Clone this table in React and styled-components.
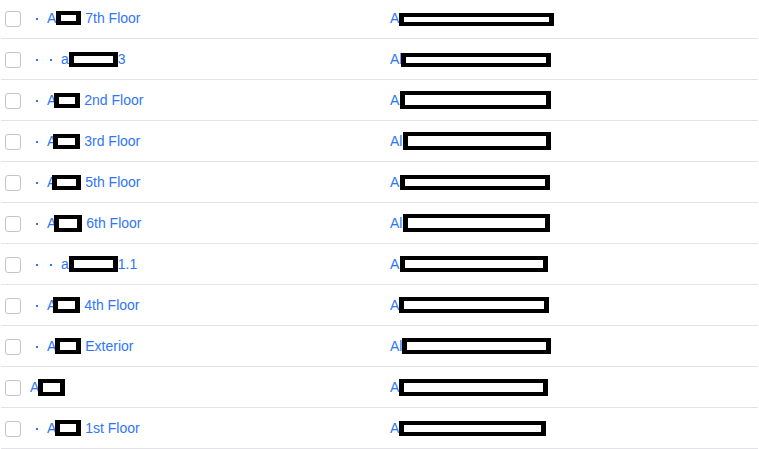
import React from "react";
import styled, { createGlobalStyle } from "styled-components";

const Global = createGlobalStyle`
  html, body { margin: 0; padding: 0; background: #fff; overflow: hidden; }
  body { font-family: "Liberation Sans", Arial, sans-serif; }
`;

const List = styled.div`
  margin-top: -2px;
  padding: 0 1px;
`;

const Row = styled.div`
  display: grid;
  grid-template-columns: 29px 360px 1fr;
  align-items: center;
  height: 40px;
  border-bottom: 1px solid #e2e2e8;
`;

const CheckCell = styled.div`
  display: flex;
  align-items: center;
  padding-left: 4px;
  padding-top: 1px;
`;

const Check = styled.span`
  box-sizing: border-box;
  width: 16px;
  height: 16px;
  border: 1px solid #c5c5c8;
  border-radius: 3px;
  background: #fff;
`;

const Cell = styled.div`
  display: flex;
  align-items: center;
  white-space: pre;
  font-size: 14px;
  color: #2f76f7;
  line-height: 20px;
`;

const Indent = styled.span`
  display: flex;
  margin-left: 3px;
`;

const Unit = styled.span`
  width: 14px;
  height: 20px;
  position: relative;
  &::before {
    content: "";
    position: absolute;
    left: 3px;
    top: 10px;
    width: 2px;
    height: 2px;
    background: #2f76f7;
  }
`;

const Redact = styled.span`
  box-sizing: border-box;
  display: inline-block;
  flex: none;
  background: #fff;
  border: solid #000;
  border-width: 4px 5px;
  width: ${(p) => p.$w}px;
  height: ${(p) => p.$h}px;
  margin-left: ${(p) => p.$dx}px;
  transform: translateY(${(p) => p.$dy || 0}px);
`;

const rows = [
  { level: 1, pre: "A", l: { dx: 0, w: 25, h: 14, dy: 0 }, post: " 7th Floor", rp: "A", r: { dx: 0, w: 155, h: 13, dy: 1 } },
  { level: 2, pre: "a", l: { dx: 0, w: 49, h: 15, dy: 0 }, post: "3", rp: "Al", r: { dx: -1, w: 150, h: 14, dy: 1 } },
  { level: 1, pre: "A", l: { dx: -2, w: 26, h: 15, dy: 0 }, post: " 2nd Floor", rp: "A", r: { dx: 1, w: 151, h: 18, dy: 0 } },
  { level: 1, pre: "A", l: { dx: -3, w: 27, h: 15, dy: 0 }, post: " 3rd Floor", rp: "Al", r: { dx: 1, w: 148, h: 18, dy: 0 } },
  { level: 1, pre: "A", l: { dx: -4, w: 29, h: 15, dy: 0 }, post: " 5th Floor", rp: "A", r: { dx: 1, w: 150, h: 15, dy: 0 } },
  { level: 1, pre: "A", l: { dx: -2, w: 28, h: 17, dy: 0 }, post: " 6th Floor", rp: "Al", r: { dx: 1, w: 147, h: 18, dy: 0 } },
  { level: 2, pre: "a", l: { dx: 0, w: 49, h: 16, dy: 0 }, post: "1.1", rp: "A", r: { dx: 1, w: 148, h: 16, dy: 0 } },
  { level: 1, pre: "A", l: { dx: -3, w: 27, h: 16, dy: 0 }, post: " 4th Floor", rp: "A", r: { dx: 0, w: 150, h: 16, dy: 0 } },
  { level: 1, pre: "A", l: { dx: -1, w: 26, h: 16, dy: 0 }, post: " Exterior", rp: "Al", r: { dx: 0, w: 149, h: 16, dy: 0 } },
  { level: 0, pre: "A", l: { dx: -1, w: 27, h: 17, dy: 0 }, post: "", rp: "A", r: { dx: 0, w: 149, h: 17, dy: 0 } },
  { level: 1, pre: "A", l: { dx: -1, w: 26, h: 16, dy: 0 }, post: " 1st Floor", rp: "A", r: { dx: 0, w: 147, h: 15, dy: 0 } },
];

export default function App() {
  return (
    <>
      <Global />
      <List>
        {rows.map((row, i) => (
          <Row key={i}>
            <CheckCell>
              <Check />
            </CheckCell>
            <Cell>
              {row.level > 0 && (
                <Indent>
                  {Array.from({ length: row.level }).map((_, k) => (
                    <Unit key={k} />
                  ))}
                </Indent>
              )}
              <span>{row.pre}</span>
              <Redact $w={row.l.w} $h={row.l.h} $dx={row.l.dx} $dy={row.l.dy} />
              <span>{row.post}</span>
            </Cell>
            <Cell>
              <span>{row.rp}</span>
              <Redact $w={row.r.w} $h={row.r.h} $dx={row.r.dx} $dy={row.r.dy} />
            </Cell>
          </Row>
        ))}
      </List>
    </>
  );
}
